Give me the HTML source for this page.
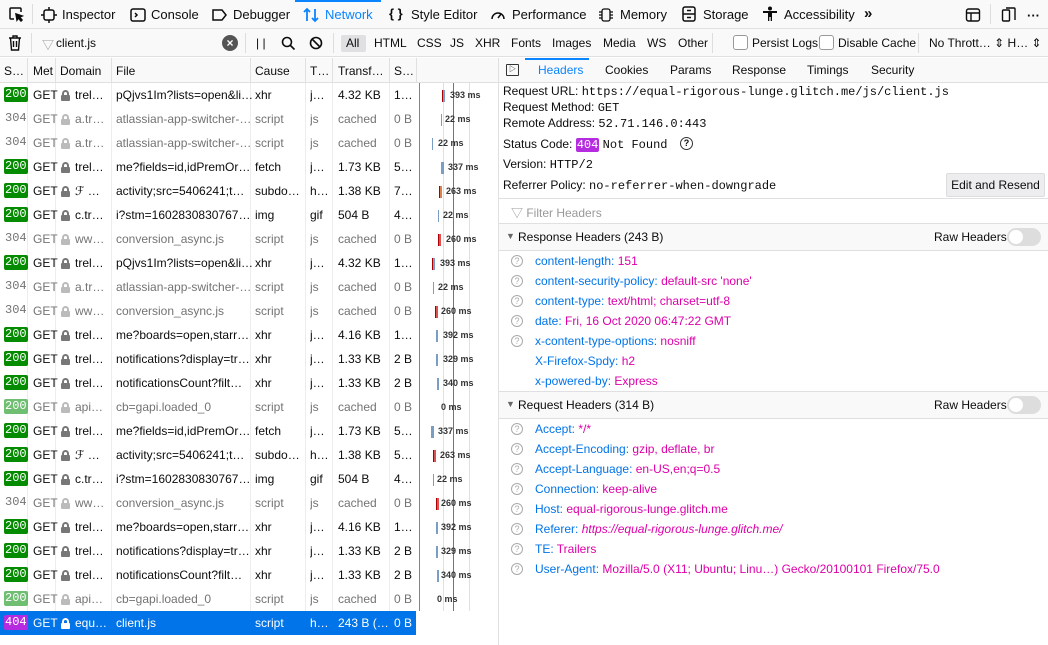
<!DOCTYPE html>
<html><head><meta charset="utf-8">
<style>
*{box-sizing:border-box;margin:0;padding:0}
body{width:1048px;height:645px;overflow:hidden;background:#fff;font:12px "Liberation Sans","Noto Sans CJK JP",sans-serif;color:#0c0c0d;position:relative}
.a{position:absolute;white-space:nowrap}
.tb{top:0;left:0;width:1048px;height:29px;background:#f9f9fa;border-bottom:1px solid #e0e0e2}
.tb .a{top:7px;font-size:13px}
.fb{top:29px;left:0;width:1048px;height:28px;background:#f9f9fa;border-bottom:1px solid #e0e0e2}
.fb .a{top:7px}
.hd{top:58px;left:0;width:498px;height:25px;background:#f9f9fa;border-bottom:1px solid #e0e0e2}
.r{position:absolute;left:0;width:416px;height:24px;overflow:visible}
.r span{position:absolute;top:5px;white-space:nowrap;overflow:hidden}
.c1{left:4px;font-family:"Liberation Mono",monospace;font-size:12px;padding:0 1px;line-height:15px;top:4px!important}
.c2{left:33px}.c3{left:75px}.c4{left:116px}.c5{left:255px}.c6{left:310px}.c7{left:338px}.c8{left:394px}
.ok{background:#058b00;color:#fff;border-radius:2px}
.okl{background:#4caf50;color:#fff;border-radius:2px;opacity:.8}
.nm{color:#737373}
.g{color:#737373}
.lk{position:absolute;left:61px;top:7px;width:9px;height:11px}
.lk:before{content:"";position:absolute;left:1px;top:0;width:7px;height:6px;border:2px solid currentColor;border-bottom:0;border-radius:4px 4px 0 0;box-sizing:border-box}
.lk:after{content:"";position:absolute;left:0;top:5px;width:9px;height:6px;background:currentColor;border-radius:1px}
.bar{position:absolute;top:7px;width:3px;height:12px}
.tl{position:absolute;top:7px;font-size:9px;font-weight:bold;color:#333;white-space:nowrap}
.vl{position:absolute;top:83px;width:1px;height:528px}
.rp .a{font-size:12px}
.mono{font-family:"Liberation Mono",monospace}
.hk{color:#0074e8}.hv{color:#dd00a9}
.q{position:absolute;left:511px;width:12px;height:12px;border:1px solid #aaa;border-radius:50%;font-size:9px;color:#aaa;text-align:center;line-height:10px}
.tog{position:absolute;left:1007px;width:34px;height:18px;background:#ddd;border-radius:9px}
.tog:after{content:"";position:absolute;left:2px;top:2px;width:14px;height:14px;background:#fff;border-radius:50%}
</style></head><body>
<div class="a tb">
<svg class="a" style="left:8px;top:6px" width="16" height="16" viewBox="0 0 16 16" fill="none" stroke="#0c0c0d" stroke-width="1.5"><path d="M6 13H3a1 1 0 0 1-1-1V3a1 1 0 0 1 1-1h9a1 1 0 0 1 1 1v3"/><path d="M8 8l6 2-2.5 1 2.5 3-1 1-2.5-3L9 14z" fill="#0c0c0d"/></svg>
<div class="a" style="left:32px;top:4px;width:1px;height:20px;background:#ddd"></div>
<svg class="a" style="left:41px;top:7px" width="16" height="16" viewBox="0 0 16 16" fill="none" stroke="#0c0c0d" stroke-width="1.5"><rect x="3" y="3" width="10" height="10" rx="2"/><path d="M8 0v3M8 13v3M0 8h3M13 8h3"/></svg>
<span class="a" style="left:62px">Inspector</span>
<svg class="a" style="left:130px;top:7px" width="16" height="16" viewBox="0 0 16 16" fill="none" stroke="#0c0c0d" stroke-width="1.5"><rect x="1" y="2" width="14" height="12" rx="2"/><path d="M5 6l2 2-2 2"/></svg>
<span class="a" style="left:151px">Console</span>
<svg class="a" style="left:211px;top:7px" width="16" height="16" viewBox="0 0 16 16" fill="none" stroke="#0c0c0d" stroke-width="1.5"><path d="M2 3h9l4 5-4 5H2z"/></svg>
<span class="a" style="left:233px">Debugger</span>
<div class="a" style="left:295px;top:0;width:86px;height:2px;background:#0a84ff"></div>
<svg class="a" style="left:303px;top:7px" width="16" height="16" viewBox="0 0 16 16" fill="none" stroke="#0a84ff" stroke-width="1.8"><path d="M4 14V2M1 5l3-3 3 3M12 2v12M9 11l3 3 3-3"/></svg>
<span class="a" style="left:325px;color:#0a84ff">Network</span>
<span class="a" style="left:389px;font-weight:bold;top:6px">{ }</span>
<span class="a" style="left:411px">Style Editor</span>
<svg class="a" style="left:490px;top:7px" width="16" height="16" viewBox="0 0 16 16" fill="none" stroke="#0c0c0d" stroke-width="1.5"><path d="M2 12a6 6 0 1 1 12 0"/><path d="M8 11l3-4"/></svg>
<span class="a" style="left:512px">Performance</span>
<svg class="a" style="left:598px;top:7px" width="16" height="16" viewBox="0 0 16 16" fill="none" stroke="#0c0c0d" stroke-width="1.3"><rect x="4" y="2" width="8" height="12" rx="2"/><path d="M1 5h3M1 8h3M1 11h3M12 5h3M12 8h3M12 11h3"/></svg>
<span class="a" style="left:620px">Memory</span>
<svg class="a" style="left:681px;top:6px" width="16" height="16" viewBox="0 0 16 16" fill="none" stroke="#0c0c0d" stroke-width="1.5"><rect x="2" y="1" width="12" height="14" rx="2"/><path d="M2 8h12M6 4.5h4M6 11.5h4"/></svg>
<span class="a" style="left:703px">Storage</span>
<svg class="a" style="left:762px;top:6px" width="16" height="16" viewBox="0 0 16 16" fill="#0c0c0d"><circle cx="8" cy="2.5" r="2"/><path d="M1 5h14v2h-5v8H8.7v-4h-1.4v4H6V7H1z"/></svg>
<span class="a" style="left:784px">Accessibility</span>
<span class="a" style="left:864px;font-weight:bold;top:5px;font-size:15px">»</span>
<svg class="a" style="left:965px;top:7px" width="16" height="16" viewBox="0 0 16 16" fill="none" stroke="#0c0c0d" stroke-width="1.4"><rect x="1.5" y="2" width="13" height="12" rx="2"/><path d="M1.5 6h13M6 6v8"/></svg>
<div class="a" style="left:990px;top:4px;width:1px;height:20px;background:#ddd"></div>
<svg class="a" style="left:1001px;top:6px" width="16" height="16" viewBox="0 0 16 16" fill="none" stroke="#0c0c0d" stroke-width="1.4"><rect x="1.5" y="4" width="7" height="11" rx="1"/><path d="M5 2h8a1 1 0 0 1 1 1v11"/></svg>
<span class="a" style="left:1027px;top:8px;font-weight:bold">···</span>
</div>
<div class="a fb">
<svg class="a" style="left:8px;top:6px" width="14" height="16" viewBox="0 0 14 16" fill="none" stroke="#0c0c0d" stroke-width="1.4"><path d="M1 3h12M5 3V1h4v2M2.5 3l1 12h7l1-12M5.5 6v6M8.5 6v6"/></svg>
<div class="a" style="left:31px;top:4px;width:1px;height:20px;background:#ddd"></div>
<span class="a" style="left:42px;color:#999">▽</span>
<span class="a" style="left:56px">client.js</span>
<div class="a" style="left:222px;top:6px;width:16px;height:16px;border-radius:50%;background:#555;color:#fff;font-size:12px;text-align:center;line-height:16px;font-weight:bold">×</div>
<div class="a" style="left:245px;top:4px;width:1px;height:20px;background:#ddd"></div>
<span class="a" style="left:256px">| |</span>
<svg class="a" style="left:281px;top:7px" width="15" height="15" viewBox="0 0 15 15" fill="none" stroke="#0c0c0d" stroke-width="1.6"><circle cx="6" cy="6" r="4.5"/><path d="M9.5 9.5l4 4"/></svg>
<svg class="a" style="left:309px;top:7px" width="14" height="14" viewBox="0 0 14 14" fill="none" stroke="#0c0c0d" stroke-width="1.6"><circle cx="7" cy="7" r="5.5"/><path d="M3 3l8 8"/></svg>
<div class="a" style="left:333px;top:4px;width:1px;height:20px;background:#ddd"></div>
<div class="a" style="left:341px;top:6px;width:25px;height:17px;background:#e0e0e2;border-radius:2px"></div>
<span class="a" style="left:346px">All</span><span class="a" style="left:374px">HTML</span><span class="a" style="left:417px">CSS</span><span class="a" style="left:450px">JS</span><span class="a" style="left:475px">XHR</span><span class="a" style="left:511px">Fonts</span><span class="a" style="left:552px">Images</span><span class="a" style="left:603px">Media</span><span class="a" style="left:647px">WS</span><span class="a" style="left:678px">Other</span>
<div class="a" style="left:712px;top:4px;width:1px;height:20px;background:#ddd"></div>
<div class="a" style="left:733px;top:6px;width:15px;height:15px;border:1px solid #999;border-radius:3px;background:#fff"></div>
<span class="a" style="left:752px">Persist Logs</span>
<div class="a" style="left:819px;top:6px;width:15px;height:15px;border:1px solid #999;border-radius:3px;background:#fff"></div>
<span class="a" style="left:838px">Disable Cache</span>
<div class="a" style="left:918px;top:4px;width:1px;height:20px;background:#ddd"></div>
<span class="a" style="left:929px">No Thrott… ⇕ H… ⇕</span>
</div>
<div class="a hd">
<span class="a" style="left:4px;top:6px">S…</span><span class="a" style="left:33px;top:6px">Met</span><span class="a" style="left:60px;top:6px">Domain</span><span class="a" style="left:116px;top:6px">File</span><span class="a" style="left:255px;top:6px">Cause</span><span class="a" style="left:310px;top:6px">T…</span><span class="a" style="left:338px;top:6px">Transf…</span><span class="a" style="left:394px;top:6px">S…</span>
<div class="a" style="left:27px;top:0;width:1px;height:25px;background:#e0e0e2"></div><div class="a" style="left:55px;top:0;width:1px;height:25px;background:#e0e0e2"></div><div class="a" style="left:111px;top:0;width:1px;height:25px;background:#e0e0e2"></div><div class="a" style="left:250px;top:0;width:1px;height:25px;background:#e0e0e2"></div><div class="a" style="left:305px;top:0;width:1px;height:25px;background:#e0e0e2"></div><div class="a" style="left:332px;top:0;width:1px;height:25px;background:#e0e0e2"></div><div class="a" style="left:389px;top:0;width:1px;height:25px;background:#e0e0e2"></div><div class="a" style="left:416px;top:0;width:1px;height:25px;background:#e0e0e2"></div>
</div>
<div class="a" style="left:27px;top:83px;width:1px;height:528px;background:#ededf0"></div><div class="a" style="left:55px;top:83px;width:1px;height:528px;background:#ededf0"></div><div class="a" style="left:111px;top:83px;width:1px;height:528px;background:#ededf0"></div><div class="a" style="left:250px;top:83px;width:1px;height:528px;background:#ededf0"></div><div class="a" style="left:305px;top:83px;width:1px;height:528px;background:#ededf0"></div><div class="a" style="left:332px;top:83px;width:1px;height:528px;background:#ededf0"></div><div class="a" style="left:389px;top:83px;width:1px;height:528px;background:#ededf0"></div>
<div class="vl" style="left:419px;background:#4a90d9"></div>
<div class="vl" style="left:443px;background:#e0e0e2"></div>
<div class="vl" style="left:469px;background:#e0e0e2"></div>
<div class="vl" style="left:453px;background:#c03ec0"></div>

<div class="r" style="top:83px"><span class="c1 ok">200</span><span class="c2">GET</span><i class="lk" style="color:#777"></i><span class="c3">trel…</span><span class="c4">pQjvs1Im?lists=open&amp;li…</span><span class="c5">xhr</span><span class="c6">j…</span><span class="c7">4.32 KB</span><span class="c8">1…</span><i class="bar" style="left:442px;background:linear-gradient(90deg,#a00 1px,#7a9cc6 1px)"></i><b class="tl" style="left:450px">393 ms</b></div>
<div class="r g" style="top:107px"><span class="c1 nm">304</span><span class="c2">GET</span><i class="lk" style="color:#bbb"></i><span class="c3">a.tr…</span><span class="c4">atlassian-app-switcher-…</span><span class="c5">script</span><span class="c6">js</span><span class="c7">cached</span><span class="c8">0 B</span><i class="bar" style="left:441px;width:1px;background:#7a9cc6"></i><b class="tl g" style="left:445px">22 ms</b></div>
<div class="r g" style="top:131px"><span class="c1 nm">304</span><span class="c2">GET</span><i class="lk" style="color:#bbb"></i><span class="c3">a.tr…</span><span class="c4">atlassian-app-switcher-…</span><span class="c5">script</span><span class="c6">js</span><span class="c7">cached</span><span class="c8">0 B</span><i class="bar" style="left:432px;width:1px;background:#7a9cc6"></i><b class="tl g" style="left:438px">22 ms</b></div>
<div class="r" style="top:155px"><span class="c1 ok">200</span><span class="c2">GET</span><i class="lk" style="color:#777"></i><span class="c3">trel…</span><span class="c4">me?fields=id,idPremOr…</span><span class="c5">fetch</span><span class="c6">j…</span><span class="c7">1.73 KB</span><span class="c8">5…</span><i class="bar" style="left:441px;background:#7a9cc6"></i><b class="tl" style="left:448px">337 ms</b></div>
<div class="r" style="top:179px"><span class="c1 ok">200</span><span class="c2">GET</span><i class="lk" style="color:#777"></i><span class="c3">ℱ …</span><span class="c4">activity;src=5406241;t…</span><span class="c5">subdo…</span><span class="c6">h…</span><span class="c7">1.38 KB</span><span class="c8">7…</span><i class="bar" style="left:439px;background:linear-gradient(90deg,#a00 1px,#e08050 1px)"></i><b class="tl" style="left:446px">263 ms</b></div>
<div class="r" style="top:203px"><span class="c1 ok">200</span><span class="c2">GET</span><i class="lk" style="color:#777"></i><span class="c3">c.tr…</span><span class="c4">i?stm=1602830830767…</span><span class="c5">img</span><span class="c6">gif</span><span class="c7">504 B</span><span class="c8">4…</span><i class="bar" style="left:438px;width:1px;background:#7a9cc6"></i><b class="tl" style="left:443px">22 ms</b></div>
<div class="r g" style="top:227px"><span class="c1 nm">304</span><span class="c2">GET</span><i class="lk" style="color:#bbb"></i><span class="c3">ww…</span><span class="c4">conversion_async.js</span><span class="c5">script</span><span class="c6">js</span><span class="c7">cached</span><span class="c8">0 B</span><i class="bar" style="left:438px;background:linear-gradient(90deg,#a00 1px,#e05050 1px)"></i><b class="tl g" style="left:446px">260 ms</b></div>
<div class="r" style="top:251px"><span class="c1 ok">200</span><span class="c2">GET</span><i class="lk" style="color:#777"></i><span class="c3">trel…</span><span class="c4">pQjvs1Im?lists=open&amp;li…</span><span class="c5">xhr</span><span class="c6">j…</span><span class="c7">4.32 KB</span><span class="c8">1…</span><i class="bar" style="left:432px;background:linear-gradient(90deg,#a00 1px,#7a9cc6 1px)"></i><b class="tl" style="left:440px">393 ms</b></div>
<div class="r g" style="top:275px"><span class="c1 nm">304</span><span class="c2">GET</span><i class="lk" style="color:#bbb"></i><span class="c3">a.tr…</span><span class="c4">atlassian-app-switcher-…</span><span class="c5">script</span><span class="c6">js</span><span class="c7">cached</span><span class="c8">0 B</span><i class="bar" style="left:433px;width:1px;background:#7a9cc6"></i><b class="tl g" style="left:438px">22 ms</b></div>
<div class="r g" style="top:299px"><span class="c1 nm">304</span><span class="c2">GET</span><i class="lk" style="color:#bbb"></i><span class="c3">ww…</span><span class="c4">conversion_async.js</span><span class="c5">script</span><span class="c6">js</span><span class="c7">cached</span><span class="c8">0 B</span><i class="bar" style="left:435px;background:linear-gradient(90deg,#a00 1px,#e05050 1px)"></i><b class="tl g" style="left:441px">260 ms</b></div>
<div class="r" style="top:323px"><span class="c1 ok">200</span><span class="c2">GET</span><i class="lk" style="color:#777"></i><span class="c3">trel…</span><span class="c4">me?boards=open,starr…</span><span class="c5">xhr</span><span class="c6">j…</span><span class="c7">4.16 KB</span><span class="c8">1…</span><i class="bar" style="left:436px;width:2px;background:#7a9cc6"></i><b class="tl" style="left:443px">392 ms</b></div>
<div class="r" style="top:347px"><span class="c1 ok">200</span><span class="c2">GET</span><i class="lk" style="color:#777"></i><span class="c3">trel…</span><span class="c4">notifications?display=tr…</span><span class="c5">xhr</span><span class="c6">j…</span><span class="c7">1.33 KB</span><span class="c8">2 B</span><i class="bar" style="left:436px;width:2px;background:#7a9cc6"></i><b class="tl" style="left:443px">329 ms</b></div>
<div class="r" style="top:371px"><span class="c1 ok">200</span><span class="c2">GET</span><i class="lk" style="color:#777"></i><span class="c3">trel…</span><span class="c4">notificationsCount?filt…</span><span class="c5">xhr</span><span class="c6">j…</span><span class="c7">1.33 KB</span><span class="c8">2 B</span><i class="bar" style="left:437px;width:2px;background:#7a9cc6"></i><b class="tl" style="left:443px">340 ms</b></div>
<div class="r g" style="top:395px"><span class="c1 okl">200</span><span class="c2">GET</span><i class="lk" style="color:#bbb"></i><span class="c3">api…</span><span class="c4">cb=gapi.loaded_0</span><span class="c5">script</span><span class="c6">js</span><span class="c7">cached</span><span class="c8">0 B</span><b class="tl g" style="left:441px">0 ms</b></div>
<div class="r" style="top:419px"><span class="c1 ok">200</span><span class="c2">GET</span><i class="lk" style="color:#777"></i><span class="c3">trel…</span><span class="c4">me?fields=id,idPremOr…</span><span class="c5">fetch</span><span class="c6">j…</span><span class="c7">1.73 KB</span><span class="c8">5…</span><i class="bar" style="left:431px;background:#7a9cc6"></i><b class="tl" style="left:438px">337 ms</b></div>
<div class="r" style="top:443px"><span class="c1 ok">200</span><span class="c2">GET</span><i class="lk" style="color:#777"></i><span class="c3">ℱ …</span><span class="c4">activity;src=5406241;t…</span><span class="c5">subdo…</span><span class="c6">h…</span><span class="c7">1.38 KB</span><span class="c8">5…</span><i class="bar" style="left:433px;background:linear-gradient(90deg,#a00 1px,#e05050 1px)"></i><b class="tl" style="left:440px">263 ms</b></div>
<div class="r" style="top:467px"><span class="c1 ok">200</span><span class="c2">GET</span><i class="lk" style="color:#777"></i><span class="c3">c.tr…</span><span class="c4">i?stm=1602830830767…</span><span class="c5">img</span><span class="c6">gif</span><span class="c7">504 B</span><span class="c8">4…</span><i class="bar" style="left:433px;width:1px;background:#7a9cc6"></i><b class="tl" style="left:437px">22 ms</b></div>
<div class="r g" style="top:491px"><span class="c1 nm">304</span><span class="c2">GET</span><i class="lk" style="color:#bbb"></i><span class="c3">ww…</span><span class="c4">conversion_async.js</span><span class="c5">script</span><span class="c6">js</span><span class="c7">cached</span><span class="c8">0 B</span><i class="bar" style="left:436px;background:linear-gradient(90deg,#a00 1px,#e05050 1px)"></i><b class="tl g" style="left:441px">260 ms</b></div>
<div class="r" style="top:515px"><span class="c1 ok">200</span><span class="c2">GET</span><i class="lk" style="color:#777"></i><span class="c3">trel…</span><span class="c4">me?boards=open,starr…</span><span class="c5">xhr</span><span class="c6">j…</span><span class="c7">4.16 KB</span><span class="c8">1…</span><i class="bar" style="left:436px;width:2px;background:#7a9cc6"></i><b class="tl" style="left:441px">392 ms</b></div>
<div class="r" style="top:539px"><span class="c1 ok">200</span><span class="c2">GET</span><i class="lk" style="color:#777"></i><span class="c3">trel…</span><span class="c4">notifications?display=tr…</span><span class="c5">xhr</span><span class="c6">j…</span><span class="c7">1.33 KB</span><span class="c8">2 B</span><i class="bar" style="left:436px;width:2px;background:#7a9cc6"></i><b class="tl" style="left:441px">329 ms</b></div>
<div class="r" style="top:563px"><span class="c1 ok">200</span><span class="c2">GET</span><i class="lk" style="color:#777"></i><span class="c3">trel…</span><span class="c4">notificationsCount?filt…</span><span class="c5">xhr</span><span class="c6">j…</span><span class="c7">1.33 KB</span><span class="c8">2 B</span><i class="bar" style="left:437px;width:2px;background:#7a9cc6"></i><b class="tl" style="left:441px">340 ms</b></div>
<div class="r g" style="top:587px"><span class="c1 okl">200</span><span class="c2">GET</span><i class="lk" style="color:#bbb"></i><span class="c3">api…</span><span class="c4">cb=gapi.loaded_0</span><span class="c5">script</span><span class="c6">js</span><span class="c7">cached</span><span class="c8">0 B</span><b class="tl g" style="left:437px">0 ms</b></div>
<div class="r" style="top:611px;background:#0074e8;color:#fff"><span class="c1" style="background:#b42be0;color:#fff;border-radius:2px">404</span><span class="c2">GET</span><i class="lk" style="color:#fff"></i><span class="c3">equ…</span><span class="c4">client.js</span><span class="c5">script</span><span class="c6">h…</span><span class="c7">243 B (…</span><span class="c8">0 B</span></div>

<div class="a" style="left:498px;top:58px;width:1px;height:587px;background:#e0e0e2"></div>
<div class="rp">
<div class="a" style="left:499px;top:58px;width:549px;height:25px;background:#f9f9fa;border-bottom:1px solid #e0e0e2"></div>
<div class="a" style="left:506px;top:64px;width:13px;height:12px;border:1px solid #333;border-radius:1px;font-size:7px;line-height:10px;text-align:center">▷</div>
<div class="a" style="left:525px;top:58px;width:64px;height:2px;background:#0a84ff"></div>
<span class="a" style="left:538px;top:63px;color:#0a84ff">Headers</span><span class="a" style="left:605px;top:63px">Cookies</span><span class="a" style="left:670px;top:63px">Params</span><span class="a" style="left:732px;top:63px">Response</span><span class="a" style="left:807px;top:63px">Timings</span><span class="a" style="left:871px;top:63px">Security</span>
<span class="a" style="left:503px;top:84px">Request URL: <span class="mono">https://equal-rigorous-lunge.glitch.me/js/client.js</span></span>
<span class="a" style="left:503px;top:100px">Request Method: <span class="mono">GET</span></span>
<span class="a" style="left:503px;top:116px">Remote Address: <span class="mono">52.71.146.0:443</span></span>
<span class="a" style="left:503px;top:137px">Status Code: <span class="mono" style="background:#b42be0;color:#fff;padding:0 1px;border-radius:2px">404</span> <span class="mono">Not Found</span></span>
<div class="a" style="left:680px;top:137px;width:13px;height:13px;border:1.5px solid #333;border-radius:50%;font-size:9px;text-align:center;line-height:10px;font-weight:bold">?</div>
<span class="a" style="left:503px;top:157px">Version: <span class="mono">HTTP/2</span></span>
<span class="a" style="left:503px;top:178px">Referrer Policy: <span class="mono">no-referrer-when-downgrade</span></span>
<div class="a" style="left:946px;top:173px;width:99px;height:24px;background:#ededf0;border:1px solid #ddd;border-radius:2px;text-align:center;line-height:22px">Edit and Resend</div>
<div class="a" style="left:499px;top:198px;width:549px;height:1px;background:#e0e0e2"></div>
<span class="a" style="left:511px;top:204px;color:#999">▽ Filter Headers</span>
<div class="a" style="left:499px;top:223px;width:549px;height:28px;background:#f9f9fa;border-top:1px solid #e0e0e2;border-bottom:1px solid #e0e0e2"></div>
<span class="a" style="left:506px;top:231px;font-size:9px;color:#666">▼</span><span class="a" style="left:518px;top:230px">Response Headers (243 B)</span>
<span class="a" style="left:934px;top:230px">Raw Headers</span><div class="tog" style="top:228px"></div>
<div class="q" style="top:255px">?</div><span class="a" style="left:535px;top:254px"><span class="hk">content-length:</span> <span class="hv">151</span></span>
<div class="q" style="top:275px">?</div><span class="a" style="left:535px;top:274px"><span class="hk">content-security-policy:</span> <span class="hv">default-src 'none'</span></span>
<div class="q" style="top:295px">?</div><span class="a" style="left:535px;top:294px"><span class="hk">content-type:</span> <span class="hv">text/html; charset=utf-8</span></span>
<div class="q" style="top:315px">?</div><span class="a" style="left:535px;top:314px"><span class="hk">date:</span> <span class="hv">Fri, 16 Oct 2020 06:47:22 GMT</span></span>
<div class="q" style="top:335px">?</div><span class="a" style="left:535px;top:334px"><span class="hk">x-content-type-options:</span> <span class="hv">nosniff</span></span>
<span class="a" style="left:535px;top:354px"><span class="hk">X-Firefox-Spdy:</span> <span class="hv">h2</span></span>
<span class="a" style="left:535px;top:374px"><span class="hk">x-powered-by:</span> <span class="hv">Express</span></span>
<div class="a" style="left:499px;top:391px;width:549px;height:28px;background:#f9f9fa;border-top:1px solid #e0e0e2;border-bottom:1px solid #e0e0e2"></div>
<span class="a" style="left:506px;top:399px;font-size:9px;color:#666">▼</span><span class="a" style="left:518px;top:398px">Request Headers (314 B)</span>
<span class="a" style="left:934px;top:398px">Raw Headers</span><div class="tog" style="top:396px"></div>
<div class="q" style="top:423px">?</div><span class="a" style="left:535px;top:422px"><span class="hk">Accept:</span> <span class="hv">*/*</span></span>
<div class="q" style="top:443px">?</div><span class="a" style="left:535px;top:442px"><span class="hk">Accept-Encoding:</span> <span class="hv">gzip, deflate, br</span></span>
<div class="q" style="top:463px">?</div><span class="a" style="left:535px;top:462px"><span class="hk">Accept-Language:</span> <span class="hv">en-US,en;q=0.5</span></span>
<div class="q" style="top:483px">?</div><span class="a" style="left:535px;top:482px"><span class="hk">Connection:</span> <span class="hv">keep-alive</span></span>
<div class="q" style="top:503px">?</div><span class="a" style="left:535px;top:502px"><span class="hk">Host:</span> <span class="hv">equal-rigorous-lunge.glitch.me</span></span>
<div class="q" style="top:523px">?</div><span class="a" style="left:535px;top:522px"><span class="hk">Referer:</span> <span class="hv" style="font-style:italic">https://equal-rigorous-lunge.glitch.me/</span></span>
<div class="q" style="top:543px">?</div><span class="a" style="left:535px;top:542px"><span class="hk">TE:</span> <span class="hv">Trailers</span></span>
<div class="q" style="top:563px">?</div><span class="a" style="left:535px;top:562px"><span class="hk">User-Agent:</span> <span class="hv">Mozilla/5.0 (X11; Ubuntu; Linu…) Gecko/20100101 Firefox/75.0</span></span>
</div>
</body></html>
